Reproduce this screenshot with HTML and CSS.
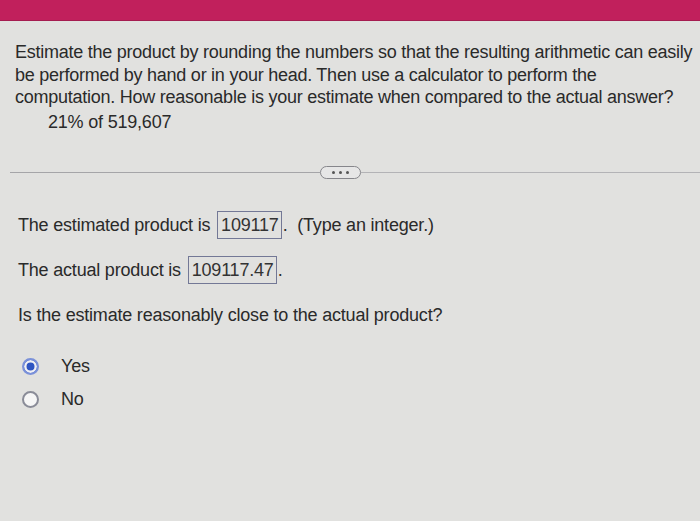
FILE: index.html
```html
<!DOCTYPE html>
<html>
<head>
<meta charset="utf-8">
<link rel="stylesheet" href="styles.css">
</head>
<body>
<div class="topbar"></div>
<div class="content">
  <p class="question">Estimate the product by rounding the numbers so that the resulting arithmetic can easily<br>be performed by hand or in your head. Then use a calculator to perform the<br>computation. How reasonable is your estimate when compared to the actual answer?</p>
  <p class="expr">21% of 519,607</p>
</div>
<div class="divider">
  <span class="line"></span>
  <span class="pill"><i></i><i></i><i></i></span>
  <span class="line"></span>
</div>
<div class="answers">
  <p class="row row-first">The estimated product is <span class="box">109117</span>. <span class="hint">(Type an integer.)</span></p>
  <p class="row">The actual product is <span class="box">109117.47</span>.</p>
  <p class="row">Is the estimate reasonably close to the actual product?</p>
  <div class="options">
    <div class="opt"><span class="radio checked"></span><span>Yes</span></div>
    <div class="opt"><span class="radio"></span><span>No</span></div>
  </div>
</div>
</body>
</html>
```
FILE: styles.css
```css
html, body {
  margin: 0;
  padding: 0;
}
body {
  width: 700px;
  height: 521px;
  overflow: hidden;
  background: #e1e1df;
  font-family: "Liberation Sans", Arial, sans-serif;
  color: #2a2a2a;
}
.topbar {
  height: 20px;
  background: #c1205c;
  border-bottom: 1px solid #a51c50;
}
.content {
  padding: 20px 0 0 15px;
}
.question {
  margin: 0;
  font-size: 18px;
  letter-spacing: -0.25px;
  line-height: 22.5px;
  white-space: nowrap;
}
.expr {
  margin: 3px 0 0 33px;
  font-size: 18px;
  letter-spacing: -0.2px;
}
.divider {
  display: flex;
  align-items: center;
  margin: 33px 0 0 10px;
}
.divider .line {
  height: 1px;
  background: #a5a5a8;
}
.divider .line:first-child {
  width: 310px;
}
.divider .line:last-child {
  flex: 1;
  background: #b3b3b6;
}
.pill {
  width: 39px;
  height: 11px;
  border: 1px solid #86868b;
  border-radius: 7px;
  display: flex;
  justify-content: center;
  align-items: center;
  gap: 4px;
  background: #e6e6e6;
}
.pill i {
  width: 3px;
  height: 3px;
  background: #555;
  border-radius: 50%;
}
.answers {
  padding-left: 18px;
  font-size: 18px;
  letter-spacing: -0.2px;
}
.row {
  margin: 0;
  line-height: 22px;
  height: 45px;
  display: flex;
  align-items: center;
  white-space: pre;
}
.row-first {
  margin-top: 24px;
}
.box {
  border: 1px solid #737896;
  padding: 2px 2px 2px 3px;
  line-height: 22px;
  margin: 0 1px 0 2px;
  color: #333;
}
.hint {
  margin-left: 5px;
}
.options {
  margin-top: 12px;
}
.opt {
  display: flex;
  align-items: center;
  height: 33px;
  gap: 22px;
  padding-left: 4px;
}
.radio {
  width: 17px;
  height: 17px;
  border: 2px solid #8a8c98;
  border-radius: 50%;
  box-sizing: border-box;
  background: #f6f6f6;
}
.radio.checked {
  border-color: #7b91d9;
  background: #2f55c2;
  box-shadow: inset 0 0 0 2.5px #f0f0f4;
}
```
